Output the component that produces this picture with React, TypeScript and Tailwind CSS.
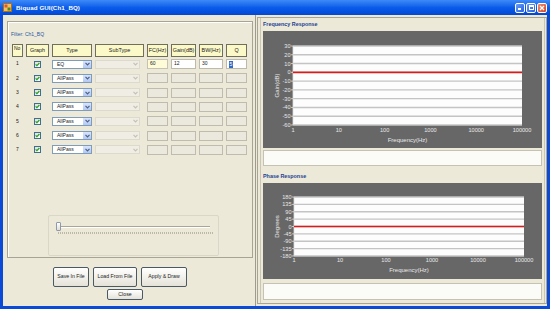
import { Fragment } from "react";

const TYPES = ["EQ", "AllPass", "AllPass", "AllPass", "AllPass", "AllPass", "AllPass"];
const HEADERS = ["Graph", "Type", "SubType", "FC(Hz)", "Gain(dB)", "BW(Hz)", "Q"];
const X_LABELS = ["1", "10", "100", "1000", "10000", "100000"];

function Chevron({ color }: { color: string }) {
	return (
		<svg width="5" height="4" viewBox="0 0 5 4">
			<path d="M0.5 0.8 L2.5 2.8 L4.5 0.8" fill="none" stroke={color} strokeWidth="1.2" />
		</svg>
	);
}

function CheckBox() {
	return (
		<div className="w-[7px] h-[7px] border border-[#3f6f8c] bg-gradient-to-br from-[#dcdcd6] to-white flex items-center justify-center">
			<svg width="5" height="5" viewBox="0 0 5 5">
				<path d="M0.6 2.4 L1.9 3.7 L4.4 1" fill="none" stroke="#21a121" strokeWidth="1.2" />
			</svg>
		</div>
	);
}

function TypeCombo({ value }: { value: string }) {
	return (
		<div className="h-[9px] w-[40px] border border-[#7f9db9] bg-white flex items-stretch">
			<span className="flex-1 pl-[4px] text-[5px] leading-[7px] text-[#222]">{value}</span>
			<div className="w-[8px] bg-gradient-to-b from-[#d8e4fd] to-[#b3c8f5] flex items-center justify-center">
				<Chevron color="#4d6185" />
			</div>
		</div>
	);
}

function SubCombo() {
	return (
		<div className="h-[9px] w-[45px] border border-[#dcdacd] bg-[#efede4] flex items-center justify-end pr-[1px]">
			<Chevron color="#c4c1b4" />
		</div>
	);
}

function Field({ value, tone }: { value?: string; tone: "yellow" | "white" | "sel" | "off" }) {
	const box =
		tone === "off"
			? "border-[#bfbcae] bg-[#ebe9de]"
			: tone === "yellow"
				? "border-[#c5c2b2] bg-[#fdfbd8]"
				: "border-[#bdbaac] bg-white";
	return (
		<div className={`h-[10px] w-full border ${box} flex items-center pl-[2px] text-[5px] text-[#222]`}>
			{tone === "sel" ? (
				<span className="bg-[#316ac5] text-white px-[0.5px] leading-[7px]">{value}</span>
			) : (
				value
			)}
		</div>
	);
}

interface ChartProps {
	height: number;
	top: number;
	bottom: number;
	left: number;
	right: number;
	ticks: string[];
	zero: number;
	title: string;
	labelY: number;
	titleY: number;
}

function Chart({ height, top, bottom, left, right, ticks, zero, title, labelY, titleY }: ChartProps) {
	const step = (bottom - top) / (ticks.length - 1);
	const xStep = (right - left) / 5;
	const midY = (top + bottom) / 2;
	return (
		<svg width="279" height={height} className="block bg-[#676767] shrink-0">
			<rect x={left} y={top} width={right - left} height={bottom - top} fill="#fdfdfd" />
			{ticks.map((t, i) => {
				const y = top + i * step;
				return (
					<Fragment key={t}>
						<line x1={left} x2={right} y1={y} y2={y} stroke="#c4c4c4" strokeWidth="1.4" />
						<line x1={left - 2} x2={left} y1={y} y2={y} stroke="#e0e0e0" strokeWidth="0.8" />
						<text
							x={left - 2.5}
							y={y + 2}
							textAnchor="end"
							fontSize="5.6"
							fill="#e8e8e8"
							fontFamily="Liberation Sans, Arial, sans-serif"
						>
							{t}
						</text>
					</Fragment>
				);
			})}
			<line x1={left} x2={left} y1={top} y2={bottom} stroke="#e0e0e0" strokeWidth="0.8" />
			<line
				x1={left}
				x2={right}
				y1={top + zero * step}
				y2={top + zero * step}
				stroke="#d81b1b"
				strokeWidth="1.6"
			/>
			{X_LABELS.map((l, i) => (
				<text
					key={l}
					x={left + i * xStep}
					y={labelY}
					textAnchor="middle"
					fontSize="5.6"
					fill="#e8e8e8"
					fontFamily="Liberation Sans, Arial, sans-serif"
				>
					{l}
				</text>
			))}
			<text
				x={(left + right) / 2}
				y={titleY}
				textAnchor="middle"
				fontSize="6"
				fill="#e8e8e8"
				fontFamily="Liberation Sans, Arial, sans-serif"
			>
				Frequency(Hz)
			</text>
			<text
				transform={`translate(16 ${midY}) rotate(-90)`}
				textAnchor="middle"
				fontSize="6"
				fill="#e8e8e8"
				fontFamily="Liberation Sans, Arial, sans-serif"
			>
				{title}
			</text>
		</svg>
	);
}

function XpButton({ label, w, h }: { label: string; w: string; h: string }) {
	return (
		<button
			type="button"
			className={`${w} ${h} rounded-[2px] border border-[#4b5866] bg-gradient-to-b from-white to-[#e4e2d8] text-[5.2px] text-[#222] flex items-center justify-center`}
		>
			{label}
		</button>
	);
}

function TitleButtons() {
	return (
		<div className="flex gap-[1px] mr-[3px]">
			<div className="w-[10px] h-[10px] rounded-[2px] border border-white bg-gradient-to-br from-[#6a9cf7] to-[#2360dd] flex items-end pl-[2px] pb-[2px]">
				<div className="w-[3px] h-[1.5px] bg-white" />
			</div>
			<div className="w-[10px] h-[10px] rounded-[2px] border border-white bg-gradient-to-br from-[#6a9cf7] to-[#2360dd] flex items-center justify-center">
				<div className="w-[5px] h-[5px] border border-white border-t-2" />
			</div>
			<div className="w-[10px] h-[10px] rounded-[2px] border border-white bg-gradient-to-br from-[#ef8c6c] to-[#d6411b] flex items-center justify-center">
				<svg width="6" height="6" viewBox="0 0 6 6">
					<path d="M1 1 L5 5 M5 1 L1 5" stroke="white" strokeWidth="1.3" />
				</svg>
			</div>
		</div>
	);
}

export default function App() {
	return (
		<div className="w-[550px] h-[309px] overflow-hidden flex flex-col bg-[#0b4ad6] font-['Liberation_Sans',Arial,sans-serif]">
			{/* title bar */}
			<div className="h-[15px] shrink-0 flex items-center bg-gradient-to-b from-[#3d8af7] via-[#0a5cea] to-[#0446d4]">
				<svg width="9" height="9" viewBox="0 0 9 9" className="ml-[3px]">
					<rect x="0.5" y="0.5" width="8" height="8" fill="#f0c060" stroke="#b36b1c" />
					<rect x="1.5" y="1.5" width="3" height="3" fill="#e2572a" />
					<rect x="4.5" y="4.5" width="3" height="3" fill="#4c8a2c" />
				</svg>
				<span className="ml-[4px] text-[6.2px] font-bold text-white tracking-[0.1px]">Biquad GUI(Ch1_BQ)</span>
				<div className="flex-1" />
				<TitleButtons />
			</div>

			{/* body */}
			<div className="flex-1 mx-[3px] mb-[3px] bg-[#ece9d8] flex">
				{/* left column */}
				<div className="w-[253px] border-r border-[#9e9b8d] flex flex-col">
					<div className="ml-[4px] mt-[6px] w-[246px] h-[237px] border border-[#a7a495] shadow-[inset_1px_1px_0_#fff] flex flex-col">
						<div className="pl-[3px] pt-[8px] h-[16px] text-[5px] leading-[8px] text-[#2a55a0]">Filter: Ch1_BQ</div>

						<div className="ml-[4px] mt-[6px] grid grid-cols-[11px_23px_40px_49px_21px_25px_24px_21px] gap-x-[3px]">
							<div className="h-[13px] border border-[#70705a] bg-[#fbf9c7] text-[5px] leading-[6px] pl-[1px] text-[#222]">No</div>
							{HEADERS.map((h) => (
								<div
									key={h}
									className="h-[13px] border border-[#70705a] bg-[#fbf9c7] text-[5.4px] text-[#222] flex items-center justify-center"
								>
									{h}
								</div>
							))}
						</div>

						<div className="ml-[4px] mt-[2px] flex flex-col gap-[4.33px]">
							{TYPES.map((t, i) => (
								<div
									key={i}
									className="h-[10px] grid grid-cols-[11px_23px_40px_49px_21px_25px_24px_21px] gap-x-[3px] items-center"
								>
									<div className="text-[5px] text-[#222] text-center">{i + 1}</div>
									<div className="flex justify-center">
										<CheckBox />
									</div>
									<TypeCombo value={t} />
									<SubCombo />
									{i === 0 ? (
										<>
											<Field value="60" tone="yellow" />
											<Field value="12" tone="white" />
											<Field value="30" tone="white" />
											<Field value="5" tone="sel" />
										</>
									) : (
										<>
											<Field tone="off" />
											<Field tone="off" />
											<Field tone="off" />
											<Field tone="off" />
										</>
									)}
								</div>
							))}
						</div>

						<div className="mt-auto mb-[1px] ml-[40px] w-[171px] h-[41px] border border-[#dad7c8] rounded-[2px] flex flex-col pt-[6px] px-[7px]">
							<div className="relative h-[10px]">
								<div className="absolute left-[2px] right-[1px] top-[4px] h-[2px] border-t border-[#a9a698] border-b border-b-white" />
								<div className="absolute left-0 top-0 w-[5px] h-[9px] rounded-[1px] border border-[#8e9aab] bg-gradient-to-b from-white to-[#e0ded4]" />
							</div>
							<svg width="155" height="2" className="ml-[2px]">
								<line x1="0" x2="155" y1="1" y2="1" stroke="#8a8778" strokeWidth="1" strokeDasharray="1 1" />
							</svg>
						</div>
					</div>

					<div className="mt-[9px] ml-[50px] flex gap-[4px]">
						<XpButton label="Save In File" w="w-[36px]" h="h-[20px]" />
						<XpButton label="Load From File" w="w-[44px]" h="h-[20px]" />
						<XpButton label="Apply & Draw" w="w-[46px]" h="h-[20px]" />
					</div>
					<div className="mt-[2px] ml-[104px]">
						<XpButton label="Close" w="w-[36px]" h="h-[11px]" />
					</div>
				</div>

				{/* right panel */}
				<div className="ml-[1px] mt-[2px] mb-[2px] flex-1 border border-[#a7a495] flex">
					<div className="ml-[2px] mr-[1px] flex-1 border-l border-r border-[#c9c6b6] px-[2px] flex flex-col">
						<div className="mt-[2px] h-[9px] text-[5.4px] font-bold text-[#1c3f94] leading-[9px]">Frequency Response</div>
						<div className="mt-[2px]">
							<Chart
								height={117}
								top={15}
								bottom={94}
								left={30}
								right={259}
								ticks={["30", "20", "10", "0", "-10", "-20", "-30", "-40", "-50", "-60"]}
								zero={3}
								title="Gain(dB)"
								labelY={101}
								titleY={111}
							/>
						</div>
						<div className="mt-[2px] h-[16px] border border-[#c5c2b4] bg-[#fbfbf7]" />

						<div className="mt-[6px] h-[9px] text-[5.4px] font-bold text-[#1c3f94] leading-[9px]">Phase Response</div>
						<div className="mt-[2px]">
							<Chart
								height={96}
								top={14}
								bottom={73}
								left={31}
								right={261}
								ticks={["180", "135", "90", "45", "0", "-45", "-90", "-135", "-180"]}
								zero={4}
								title="Degrees"
								labelY={79}
								titleY={89}
							/>
						</div>
						<div className="mt-[4px] h-[17px] border border-[#c5c2b4] bg-[#fbfbf7]" />
					</div>
				</div>
			</div>
		</div>
	);
}
